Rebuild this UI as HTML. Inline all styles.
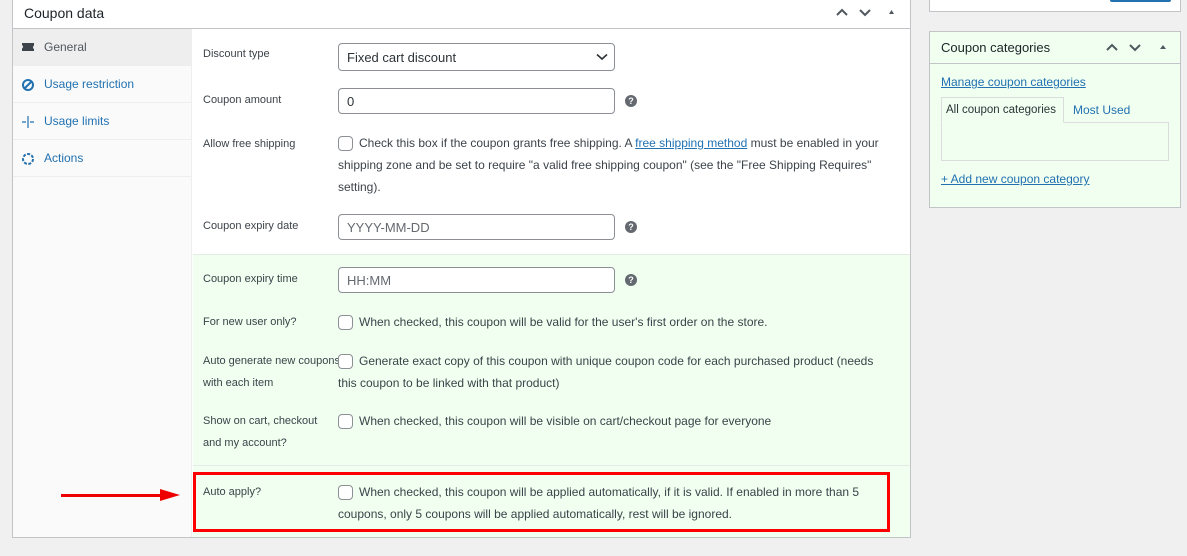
<!DOCTYPE html>
<html><head><meta charset="utf-8"><style>
*{box-sizing:border-box;margin:0;padding:0}
body{width:1187px;height:556px;background:#f0f0f1;font-family:"Liberation Sans",Arial,sans-serif;color:#3c434a;position:relative;overflow:hidden}
.a{position:absolute}
.lbl{position:absolute;left:203px;font-size:11px;color:#3c434a;line-height:22px}
.inp{position:absolute;left:338px;width:277px;height:26px;border:1px solid #8c8f94;border-radius:4px;background:#fff;font-size:13px;padding:5px 8px;color:#2c3338}
.cb{position:absolute;left:338px;width:15px;height:15px;border:1px solid #8c8f94;border-radius:4px;background:#fff}
.txt{position:absolute;left:338px;width:548px;font-size:12px;line-height:22px;color:#3c434a;text-indent:21px}
.q{position:absolute;left:625px;width:12px;height:12px;border-radius:50%;background:#646970;color:#fff;font-size:9px;font-weight:bold;text-align:center;line-height:12px}
.nav{position:absolute;left:13px;width:178px;height:37px;border-bottom:1px solid #eee;font-size:12px;color:#2271b1;line-height:37px;padding-left:31px}
a{color:#2271b1}
</style></head><body>
<div class="a" style="left:12px;top:-2px;width:899px;height:540px;background:#fff;border:1px solid #c3c4c7"></div>
<div class="a" style="left:13px;top:-2px;width:897px;height:31px;border-bottom:1px solid #c3c4c7;background:#fff"></div>
<div class="a" style="left:24px;top:5px;font-size:14px;color:#1d2327">Coupon data</div>
<svg class="a" style="left:835px;top:6px" width="60" height="12"><path d="M2 9 L7 4 L12 9 M25 4 L30 9 L35 4" stroke="#50575e" stroke-width="2" fill="none"/><path d="M54 8 L59 8 L56.5 4Z" fill="#50575e"/></svg>
<div class="a" style="left:13px;top:29px;width:179px;height:508px;background:#fafafa;border-right:1px solid #eee"></div>
<div class="nav" style="top:29px;background:#eee;color:#50575e">General</div>
<div class="nav" style="top:66px">Usage restriction</div>
<div class="nav" style="top:103px">Usage limits</div>
<div class="nav" style="top:140px">Actions</div>
<svg class="a" style="left:21px;top:42px" width="14" height="130">
<path d="M1 1h12v2.5a2 2 0 0 0 0 3.5V9H1V6.5a2 2 0 0 0 0-3.5Z" fill="#3c434a"/>
<circle cx="7" cy="43" r="5" stroke="#2271b1" stroke-width="2" fill="none"/><path d="M3.5 46.5L10.5 39.5" stroke="#2271b1" stroke-width="2"/>
<path d="M7 74v12M1 80h4M9 80h4" stroke="#2271b1" stroke-width="1.2"/>
<circle cx="7" cy="117" r="5" stroke="#2271b1" stroke-width="2" fill="none" stroke-dasharray="3 1.5"/>
</svg>
<div class="a" style="left:193px;top:254px;width:717px;height:283px;background:#f0fff0;border-top:1px solid #e5eae5"></div>
<div class="a" style="left:193px;top:465px;width:717px;height:1px;background:#e5eae5"></div>
<div class="lbl" style="top:43px">Discount type</div>
<div class="inp" style="top:43px;height:28px;padding-top:6px">Fixed cart discount</div>
<svg class="a" style="left:596px;top:53px" width="12" height="8"><path d="M1 1.5L6 6L11 1.5" stroke="#2c3338" stroke-width="1.6" fill="none"/></svg>
<div class="lbl" style="top:89px">Coupon amount</div>
<div class="inp" style="top:88px">0</div>
<div class="q" style="top:95px">?</div>
<div class="lbl" style="top:133px">Allow free shipping</div>
<div class="cb" style="top:136px"></div>
<div class="txt" style="top:132px">Check this box if the coupon grants free shipping. A <a href="#">free shipping method</a> must be enabled in your shipping zone and be set to require "a valid free shipping coupon" (see the "Free Shipping Requires" setting).</div>
<div class="lbl" style="top:215px">Coupon expiry date</div>
<div class="inp" style="top:214px;color:#646970">YYYY-MM-DD</div>
<div class="q" style="top:221px">?</div>
<div class="lbl" style="top:268px">Coupon expiry time</div>
<div class="inp" style="top:267px;color:#646970">HH:MM</div>
<div class="q" style="top:274px">?</div>
<div class="lbl" style="top:311px">For new user only?</div>
<div class="cb" style="top:315px"></div>
<div class="txt" style="top:311px">When checked, this coupon will be valid for the user's first order on the store.</div>
<div class="lbl" style="top:350px;width:140px">Auto generate new coupons with each item</div>
<div class="cb" style="top:354px"></div>
<div class="txt" style="top:350px;width:540px">Generate exact copy of this coupon with unique coupon code for each purchased product (needs this coupon to be linked with that product)</div>
<div class="lbl" style="top:410px;width:125px">Show on cart, checkout and my account?</div>
<div class="cb" style="top:414px"></div>
<div class="txt" style="top:410px">When checked, this coupon will be visible on cart/checkout page for everyone</div>
<div class="lbl" style="top:481px">Auto apply?</div>
<div class="cb" style="top:485px"></div>
<div class="txt" style="top:481px;width:530px">When checked, this coupon will be applied automatically, if it is valid. If enabled in more than 5 coupons, only 5 coupons will be applied automatically, rest will be ignored.</div>
<div class="a" style="left:193px;top:472px;width:697px;height:60px;border:3px solid #f00"></div>
<div class="a" style="left:61px;top:494px;width:108px;height:3px;background:#e00"></div>
<svg class="a" style="left:160px;top:489px" width="22" height="12"><path d="M0 0L20 6L0 12Z" fill="#e00"/></svg>
<div class="a" style="left:929px;top:-2px;width:252px;height:14px;background:#fff;border:1px solid #c3c4c7"></div>
<div class="a" style="left:1110px;top:-2px;width:61px;height:4px;background:#2271b1;border-radius:3px"></div>
<div class="a" style="left:929px;top:31px;width:252px;height:177px;background:#f0fff0;border:1px solid #c3c4c7"></div>
<div class="a" style="left:930px;top:63px;width:250px;height:1px;background:#c3c4c7"></div>
<div class="a" style="left:941px;top:40px;font-size:13px;color:#1d2327">Coupon categories</div>
<svg class="a" style="left:1105px;top:41px" width="65" height="12"><path d="M2 9L7 4L12 9M25 4L30 9L35 4" stroke="#50575e" stroke-width="2" fill="none"/><path d="M55 8L61 8L58 4Z" fill="#50575e"/></svg>
<div class="a" style="left:941px;top:75px;font-size:12px"><a href="#">Manage coupon categories</a></div>
<div class="a" style="left:941px;top:122px;width:228px;height:39px;border:1px solid #dcdcde"></div>
<div class="a" style="left:941px;top:97px;width:123px;height:26px;border:1px solid #dcdcde;border-bottom:1px solid #f0fff0;font-size:11.5px;color:#2c3338;padding:6px 4px;white-space:nowrap;overflow:hidden">All coupon categories</div>
<div class="a" style="left:1073px;top:103px;font-size:12px;color:#2271b1">Most Used</div>
<div class="a" style="left:941px;top:172px;font-size:12px"><a href="#">+ Add new coupon category</a></div>
</body></html>
